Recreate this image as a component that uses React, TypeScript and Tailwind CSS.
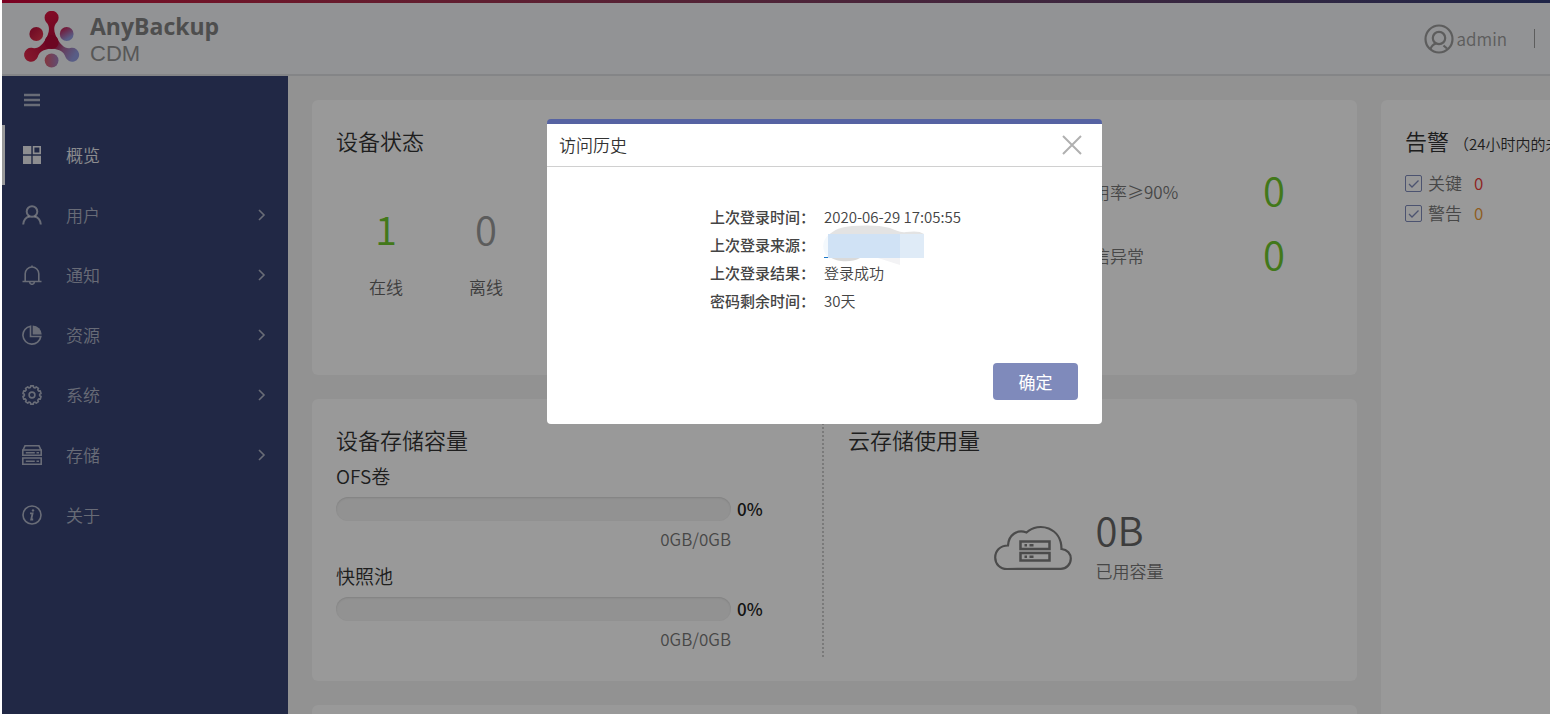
import type { ReactNode } from "react";
import clsx from "clsx";

type NavItem = {
  label: string;
  icon: ReactNode;
  active?: boolean;
  expandable?: boolean;
};

const Svg = ({ children }: { children: ReactNode }) => (
  <svg viewBox="0 0 20 20" className="size-5 shrink-0" fill="none" stroke="currentColor" strokeWidth="1.6" aria-hidden="true">
    {children}
  </svg>
);

const OverviewIcon = () => (
  <Svg>
    <path d="M1 1h8.300v8.300h-8.300zM1 10.700h8.300v8.300h-8.300zM10.700 10.700h8.300v8.300h-8.300z" fill="currentColor" stroke="none" />
    <path d="M11.600 1.800h6.600v6.600h-6.600z" />
  </Svg>
);

const UserIcon = () => (
  <Svg>
    <circle cx="10" cy="6.500" r="5.300" strokeWidth="2" />
    <path d="M1.200 19.500c.4-4.500 3-7.300 6.300-8M18.800 19.500c-.4-4.500-3-7.300-6.300-8" strokeWidth="2" />
  </Svg>
);

const BellIcon = () => (
  <Svg>
    <path d="M.5 16.500h19M3.200 16.500V8.800a6.800 6.800 0 0 1 13.600 0v7.700M10 2V.4M7.600 17c.3 3 4.500 3 4.800 0" />
  </Svg>
);

const PieIcon = () => (
  <Svg>
    <path d="M8.500 1.200a9 9 0 1 0 10.300 10.300H8.500z" />
    <path d="M10.700.5a9 9 0 0 1 9 9h-9z" fill="currentColor" stroke="none" />
  </Svg>
);

// outline of a cog with short rounded teeth, centred in a 20x20 box
const cogPath = (teeth: number, outer: number, inner: number) => {
  const step = (Math.PI * 2) / teeth;
  const points: string[] = [];
  for (let i = 0; i < teeth; i++) {
    [
      [-0.24, outer],
      [0.24, outer],
      [0.34, inner],
      [0.66, inner],
    ].forEach(([offset, radius]) => {
      const angle = (i + offset) * step - Math.PI / 2;
      points.push(`${(10 + radius * Math.cos(angle)).toFixed(2)} ${(10 + radius * Math.sin(angle)).toFixed(2)}`);
    });
  }
  return `M${points.join("L")}z`;
};

const GearIcon = () => (
  <Svg>
    <path strokeLinejoin="round" d={cogPath(10, 9.2, 7.7)} />
    <circle cx="10" cy="10" r="2.900" />
  </Svg>
);

const StorageIcon = () => (
  <Svg>
    <path d="M.8 5.500 3 .8h14l2.200 4.700M.8 5v5.300h18.400V5zM.8 13v6.200h18.400V13z" />
    <path d="M3.800 7.700h9M3.800 16.200h9M14.500 7.700h2.500M14.500 16.200h2.500" />
  </Svg>
);

const InfoIcon = () => (
  <Svg>
    <circle cx="10" cy="10" r="9" />
    <path d="M8 8.300h2.600L9.200 14.500h2" strokeWidth="1.800" />
    <circle cx="11" cy="5.400" r="1.200" fill="currentColor" stroke="none" />
  </Svg>
);

const navItems: NavItem[] = [
  { label: "概览", icon: <OverviewIcon />, active: true },
  { label: "用户", icon: <UserIcon />, expandable: true },
  { label: "通知", icon: <BellIcon />, expandable: true },
  { label: "资源", icon: <PieIcon />, expandable: true },
  { label: "系统", icon: <GearIcon />, expandable: true },
  { label: "存储", icon: <StorageIcon />, expandable: true },
  { label: "关于", icon: <InfoIcon /> },
];

const alarms = [
  { id: "critical", label: "关键", count: 0, color: "text-[#ee3a37]" },
  { id: "warning", label: "警告", count: 0, color: "text-[#ee9a35]" },
];

const volumes = [
  { name: "OFS卷", percent: 0, usage: "0GB/0GB" },
  { name: "快照池", percent: 0, usage: "0GB/0GB" },
];

// one arm of the logo, pointing up from the hub
const logoArm = "M22 30C26 22 28 16 23 11A7 7 0 1 1 34.200 11C29.200 16 31.200 22 35.200 30z";

const Logo = () => (
  <svg viewBox="0 0 57 57" className="size-[57px]" aria-hidden="true">
    <defs>
      <linearGradient id="up" gradientUnits="userSpaceOnUse" x1="22" y1="0" x2="34" y2="30">
        <stop offset="0" stopColor="#dc1440" />
        <stop offset="1" stopColor="#b40a3a" />
      </linearGradient>
      <linearGradient id="toLeft" gradientUnits="userSpaceOnUse" x1="28" y1="30" x2="28" y2="0">
        <stop offset="0" stopColor="#b40a3a" />
        <stop offset="1" stopColor="#e0284a" />
      </linearGradient>
      <linearGradient id="toRight" gradientUnits="userSpaceOnUse" x1="28" y1="28" x2="28" y2="4">
        <stop offset="0" stopColor="#b40a3a" />
        <stop offset="0.45" stopColor="#a8689c" />
        <stop offset="1" stopColor="#939ce0" />
      </linearGradient>
      <linearGradient id="left" x1="0" y1="0" x2="1" y2="1">
        <stop offset="0.1" stopColor="#b8103c" />
        <stop offset="0.9" stopColor="#e2344e" />
      </linearGradient>
      <linearGradient id="right" x1="0.2" y1="0" x2="0.8" y2="1">
        <stop offset="0.1" stopColor="#c2285c" />
        <stop offset="0.8" stopColor="#939ce0" />
      </linearGradient>
      <linearGradient id="bottom">
        <stop offset="0" stopColor="#dc5a6a" />
        <stop offset="1" stopColor="#a080c0" />
      </linearGradient>
    </defs>
    <path d={logoArm} fill="url(#toLeft)" transform="rotate(-122 28.600 31)" />
    <path d={logoArm} fill="url(#toRight)" transform="rotate(122 28.600 31)" />
    <path d={logoArm} fill="url(#up)" />
    <circle cx="28.600" cy="31" r="7" fill="#b40a3a" />
    <circle cx="13.300" cy="23" r="6.900" fill="url(#left)" />
    <circle cx="43.700" cy="23" r="6.900" fill="url(#right)" />
    <circle cx="28.600" cy="49.500" r="6.900" fill="url(#bottom)" />
  </svg>
);

const CloudIcon = () => (
  <svg viewBox="0 0 78 46" className="h-[46px] w-[78px]" fill="none" stroke="#7d7d7d" strokeWidth="2.2" aria-hidden="true">
    <path d="M13 44C6 44 1.200 39 1.200 32.500 1.200 26 6 20.500 14 20.500 14.500 10 23 4 32.500 7.500 45-4 67.500 3 67.500 24c6 .5 9.300 5 9.300 9.500 0 6-4.500 10.300-10 10.300z" />
    <path d="M26.500 16.500h29v7.500h-29zM26.500 28h29v7.500h-29z" strokeWidth="2.500" />
    <path d="M30.500 20.200h2.500M35.500 20.200h4M30.500 31.800h2.500M35.500 31.800h4" strokeWidth="2.500" />
  </svg>
);

const Header = () => (
  <header className="border-b-2 border-[#dcdee2] bg-[#f3f5f8]">
    <div className="h-[3px] bg-gradient-to-r from-[#cc0038] to-[#343f78]" />
    <div className="flex h-[71px] items-center justify-between pr-[15px] pl-[21px]">
      <div className="flex items-center gap-[10px] pt-0.5">
        <Logo />
        <div className="flex flex-col">
          <span className="font-['Open_Sans'] text-[23px] leading-[27px] font-bold text-[#828282]">AnyBackup</span>
          <span className="font-['Liberation_Sans'] text-[22px] leading-[27px] text-[#929292]">CDM</span>
        </div>
      </div>
      <div className="flex items-center text-[#9b9b9b]">
        <button type="button" className="flex items-center gap-[3px] text-[17px]">
          <svg viewBox="0 0 30 30" className="size-[30px]" fill="none" stroke="currentColor" strokeWidth="2.200" aria-hidden="true">
            <circle cx="15" cy="15" r="13.500" />
            <circle cx="15" cy="14" r="6.200" />
            <path d="M6.500 25c1-3 3-4.800 5.500-5.500M19.500 21.500l3.500 3" />
          </svg>
          admin
        </button>
        <span className="ml-[27px] h-[19px] w-px bg-[#9b9b9b]" />
      </div>
    </div>
  </header>
);

const Sidebar = () => (
  <aside className="w-[286px] shrink-0 bg-[#374473] text-white/60">
    <button type="button" aria-label="菜单" className="flex h-12 items-center pl-[22px]">
      <svg viewBox="0 0 16 14" className="h-[14px] w-4" stroke="currentColor" strokeWidth="2.400" aria-hidden="true">
        <path d="M0 2h16M0 7h16M0 12h16" />
      </svg>
    </button>
    <nav className="pt-px">
      {navItems.map((item) => (
        <a
          key={item.label}
          href="#"
          className={clsx(
            "flex h-[60px] items-center border-l-[3px] pr-[22px] pl-[17px] text-[17px]",
            item.active ? "border-white text-white/90" : "border-transparent",
          )}
        >
          {item.icon}
          <span className="ml-6 flex-1">{item.label}</span>
          {item.expandable && (
            <svg viewBox="0 0 8 12" className="h-3 w-2" fill="none" stroke="currentColor" strokeWidth="1.600" aria-hidden="true">
              <path d="m1 1 5 5-5 5" />
            </svg>
          )}
        </a>
      ))}
    </nav>
  </aside>
);

const DeviceStatus = () => (
  <section className="flex h-[275px] justify-between rounded-md bg-white px-6 pt-6">
    <div>
      <h2 className="text-[22px] leading-8 text-[#333]">设备状态</h2>
      <div className="mt-12 flex text-center">
        <div className="w-[100px]">
          <div className="text-[40px] leading-[48px] text-[#6ec82c]">1</div>
          <div className="mt-[22px] text-[17px] text-[#666]">在线</div>
        </div>
        <div className="w-[100px]">
          <div className="text-[40px] leading-[48px] text-[#999]">0</div>
          <div className="mt-[22px] text-[17px] text-[#666]">离线</div>
        </div>
      </div>
    </div>
    <dl className="mt-9 mr-12 text-[17px] text-[#777]">
      <div className="flex h-16 items-center">
        <dt className="w-[170px]">用率≥90%</dt>
        <dd className="pb-1.5 text-[40px] text-[#6ec82c]">0</dd>
      </div>
      <div className="flex h-16 items-center">
        <dt className="w-[170px]">信异常</dt>
        <dd className="pb-1.5 text-[40px] text-[#6ec82c]">0</dd>
      </div>
    </dl>
  </section>
);

const StorageUsage = () => (
  <section className="flex h-[282px] rounded-md bg-white py-6">
    <div className="w-[49%] border-r-2 border-dotted border-[#ccc] pl-6">
      <h2 className="mb-[5px] text-[22px] leading-8 text-[#333]">设备存储容量</h2>
      {volumes.map((volume) => (
        <div key={volume.name} className="h-[100px]">
          <h3 className="mb-[5px] text-[19px] leading-8 text-[#333]">{volume.name}</h3>
          <div className="flex items-center gap-[6px]">
            <div className="h-6 w-[395px] overflow-hidden rounded-full bg-[#f3f3f3] shadow-[inset_0_1px_2px_rgba(0,0,0,0.12)]">
              <div className="h-full bg-[#6ec82c]" style={{ width: `${volume.percent}%` }} />
            </div>
            <span className="text-[17px] leading-6 font-medium text-[#222]">{volume.percent}%</span>
          </div>
          <div className="mt-0.5 w-[395px] text-right text-[17px] leading-8 text-[#777]">{volume.usage}</div>
        </div>
      ))}
    </div>
    <div className="flex flex-1 flex-col pl-6">
      <h2 className="text-[22px] leading-8 text-[#333]">云存储使用量</h2>
      <div className="mt-13 flex items-center justify-center gap-6 pr-12">
        <CloudIcon />
        <div className="pb-1">
          <div className="text-[40px] leading-[44px] text-[#666]">0B</div>
          <div className="mt-1.5 text-[17px] leading-7 text-[#777]">已用容量</div>
        </div>
      </div>
    </div>
  </section>
);

const AlarmPanel = () => (
  <section className="w-[169px] shrink-0 overflow-hidden rounded-tl-md bg-white pt-6 pl-6 whitespace-nowrap">
    <h2 className="text-[22px] leading-8 text-[#333]">
      告警 <span className="text-[15px]">（24小时内的未</span>
    </h2>
    <div className="mt-2">
      {alarms.map((alarm) => (
        <div key={alarm.id} className="flex h-[30px] items-center text-[17px] text-[#777]">
          <div className="relative mr-[6px] size-[17px]">
            <input
              id={alarm.id}
              type="checkbox"
              defaultChecked
              className="peer block size-[17px] appearance-none rounded-xs border border-[#7f8abb]"
            />
            <svg
              viewBox="0 0 17 17"
              className="pointer-events-none absolute inset-0 hidden size-[17px] peer-checked:block"
              fill="none"
              stroke="#7f8abb"
              strokeWidth="1.300"
              aria-hidden="true"
            >
              <path d="m4 9 3 3 6.500-6.500" />
            </svg>
          </div>
          <label htmlFor={alarm.id}>{alarm.label}</label>
          <span className={clsx("ml-3", alarm.color)}>{alarm.count}</span>
        </div>
      ))}
    </div>
  </section>
);

const MaskedSource = () => (
  <svg viewBox="0 0 104 42" className="absolute -top-1.5 -left-0.5 h-[42px] w-[104px]" aria-hidden="true">
    <path d="M8 9C0 14-2 26 8 34z" fill="#f4f9fd" />
    <path d="M6 11C12 4 20 2 30 1c14-1 28-1 38 2 6 2 10 5 16 4 8-1 14-1 18 2v5H6z" fill="#e3e3e3" />
    <path d="M8 32c6 5 22 6 30 1z" fill="#dadada" />
    <path d="M56 33h22v7z" fill="#f3f3f5" />
    <path d="M6 9h72v24H6z" fill="#d0e2f5" />
    <path d="M78 9h24v24H78z" fill="#dfebf7" />
    <path d="M2 32h4v1H2z" fill="#1c78c8" />
  </svg>
);

const loginInfo: { label: string; value: ReactNode }[] = [
  { label: "上次登录时间", value: "2020-06-29 17:05:55" },
  { label: "上次登录来源", value: <MaskedSource /> },
  { label: "上次登录结果", value: "登录成功" },
  { label: "密码剩余时间", value: "30天" },
];

const HistoryDialog = () => (
  <div
    role="dialog"
    aria-labelledby="dialog-title"
    className="absolute top-[119px] left-[545px] w-[555px] overflow-hidden rounded-sm border-t-[5px] border-[#5663a2] bg-white"
  >
    <div className="flex h-[43px] items-center justify-between border-b border-[#d0d0d0] pr-5 pl-3">
      <h1 id="dialog-title" className="text-[17px] text-[#333]">访问历史</h1>
      <button type="button" aria-label="关闭">
        <svg viewBox="0 0 20 20" className="size-5" stroke="#b0b0b0" strokeWidth="2" aria-hidden="true">
          <path d="m1 1 18 18M19 1 1 19" />
        </svg>
      </button>
    </div>
    <dl className="pt-9 pl-[163px] text-[15px] leading-7 text-[#444]">
      {loginInfo.map((row) => (
        <div key={row.label} className="flex">
          <dt className="w-[114px] font-medium text-[#444]">{row.label}：</dt>
          <dd className="relative">{row.value}</dd>
        </div>
      ))}
    </dl>
    <div className="flex justify-end pt-12 pr-6 pb-6">
      <button type="button" className="h-[37px] w-[85px] rounded-sm bg-[#7f8abb] text-[17px] font-normal text-white">
        确定
      </button>
    </div>
  </div>
);

export default function App() {
  return (
    <div className="h-screen overflow-hidden bg-white pl-[2px] font-['Noto_Sans_CJK_SC',sans-serif] font-[350]">
      <div className="relative flex h-full flex-col bg-[#f3f3f3]">
        <Header />
        <div className="flex min-h-0 flex-1">
          <Sidebar />
          <main className="flex min-w-0 flex-1 gap-6 overflow-hidden pt-6 pl-6">
            <div className="flex min-w-0 flex-1 flex-col gap-6 *:shrink-0">
              <DeviceStatus />
              <StorageUsage />
              <section className="h-60 rounded-md bg-white" />
            </div>
            <AlarmPanel />
          </main>
        </div>
        <div className="absolute inset-0 bg-black/40" />
        <HistoryDialog />
      </div>
    </div>
  );
}
